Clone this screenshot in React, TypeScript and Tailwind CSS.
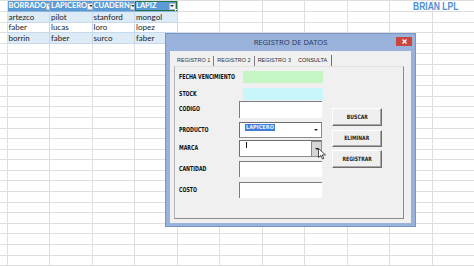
import React from 'react';

const header = ['BORRADO', 'LAPICERO', 'CUADERN', 'LAPIZ'];
const rows = [
  ['artezco', 'pilot', 'stanford', 'mongol'],
  ['faber', 'lucas', 'loro', 'lopez'],
  ['borrin', 'faber', 'surco', 'faber'],
];

function FilterBtn() {
  return (
    <span className="ml-auto mr-[1px] flex h-[7px] w-[7px] shrink-0 items-center justify-center border border-[#b9b9b9] bg-[#f4f4f4]">
      <span className="h-0 w-0 border-x-[2px] border-t-[2px] border-x-transparent border-t-[#333]" />
    </span>
  );
}

function Cell({ r, c }: { r: number; c: number }) {
  if (r === 1 && c < 4) {
    return (
      <div className="relative flex w-[42.5px] shrink-0 items-center overflow-hidden border-b border-r border-[#8fb4de] bg-[#5b9bd5] pl-[1px]">
        <span className="whitespace-nowrap text-[7.5px] font-bold leading-none text-white">{header[c]}</span>
        <FilterBtn />
        {c === 3 && (
          <>
            <span className="absolute -left-[1px] -top-[1px] h-[11.6px] w-[43.5px] border-2 border-[#217346]" />
            <span className="absolute -bottom-[2px] -right-[2px] h-[4px] w-[4px] border border-white bg-[#217346]" />
          </>
        )}
      </div>
    );
  }
  if (r >= 2 && r <= 4 && c < 4) {
    const bg = r === 3 ? 'bg-white' : 'bg-[#ddebf7]';
    return (
      <div className={`flex w-[42.5px] shrink-0 items-center border-b border-r border-[#c9d9ec] pl-[1px] ${bg}`}>
        <span className="whitespace-nowrap text-[8px] leading-none text-[#222]">{rows[r - 2][c]}</span>
      </div>
    );
  }
  return <div className="w-[42.5px] shrink-0 border-b border-r border-[#dedede]" />;
}

function Sheet() {
  return (
    <div className="flex flex-col font-['Lato',sans-serif]">
      {Array.from({ length: 26 }).map((_, r) => (
        <div key={r} className={`flex ${r === 0 ? 'h-[1.4px]' : 'h-[10.6px]'}`}>
          <div className="w-[7.5px] shrink-0 border-b border-r border-[#dedede]" />
          {Array.from({ length: 11 }).map((_, c) => (
            <Cell key={c} r={r} c={c} />
          ))}
        </div>
      ))}
    </div>
  );
}

// condensed heavy caption, squeezed to the narrow look of the form font
function Label({ text }: { text: string }) {
  return (
    <span className="w-[60px] shrink-0 origin-left scale-x-[0.77] whitespace-nowrap text-[6.8px] font-bold leading-none text-[#111]">
      {text}
    </span>
  );
}

function TextBox() {
  return <div className="h-full w-[83px] border-l border-t border-[#7c7c7c] border-b-[#f4f4f4] border-r-[#f4f4f4] bg-white" />;
}

function Arrow() {
  return <span className="h-0 w-0 border-x-[2px] border-t-[2px] border-x-transparent border-t-[#222]" />;
}

function Button({ text, h }: { text: string; h: string }) {
  return (
    <div className={`flex w-[50px] items-center justify-center border border-[#ffffff] border-b-[#6e6e6e] border-r-[#6e6e6e] bg-[#efefef] shadow-[inset_-1px_-1px_0_#a8a8a8] ${h}`}>
      <span className="scale-x-[0.85] text-[6px] font-bold leading-none text-[#222]">{text}</span>
    </div>
  );
}

function Tab({ text, line }: { text: string; line: boolean }) {
  return (
    <div className={`flex h-[10px] items-center px-[3px] ${line ? 'border-r border-[#7d7d7d]' : ''}`}>
      <span className="whitespace-nowrap text-[5.5px] leading-none text-[#333]">{text}</span>
    </div>
  );
}

function Dialog() {
  return (
    <div className="absolute left-[165px] top-[33px] flex h-[194px] w-[251px] flex-col border border-[#7895c9] bg-[#99b2dc] px-[4px] pb-[3px] font-['DejaVu_Sans_Condensed',sans-serif]">
      <div className="flex h-[17px] shrink-0 items-center justify-center">
        <span className="font-['Noto_Sans',sans-serif] text-[7.6px] leading-none text-[#2a3f66]">REGISTRO DE DATOS</span>
      </div>
      <button className="absolute right-[3px] top-[3px] flex h-[9px] w-[16px] items-center justify-center bg-[#c9473f]">
        <svg width="5" height="5" viewBox="0 0 5 5">
          <path d="M0.5 0.5 L4.5 4.5 M4.5 0.5 L0.5 4.5" stroke="#fff" strokeWidth="1.3" />
        </svg>
      </button>

      <div className="flex flex-1 flex-col bg-[#f0f0f0] pb-[4px] pl-[4px] pr-[7px] pt-[3px]">
        <div className="flex h-[12px] shrink-0 items-end font-['Liberation_Sans',sans-serif]">
          <Tab text="REGISTRO 1" line />
          <Tab text="REGISTRO 2" line />
          <Tab text="REGISTRO 3" line={false} />
          <div className="flex h-[11px] items-center border-r border-[#6f6f6f] pl-[4px] pr-[4px]">
            <span className="whitespace-nowrap text-[5.5px] leading-none text-[#222]">CONSULTA</span>
          </div>
        </div>

        <div className="relative flex flex-1 border border-[#b4b4b4] border-b-[#8a8a8a] border-r-[#8a8a8a] border-t-[#e2e2e2] pl-[4px]">
          <div className="flex w-[144px] flex-col">
            <div className="mt-[4px] flex h-[12px] items-center">
              <Label text="FECHA VENCIMIENTO" />
              <div className="ml-[4px] h-full w-[80px] bg-[#c4f5c3]" />
            </div>
            <div className="mt-[5px] flex h-[12px] items-center">
              <Label text="STOCK" />
              <div className="ml-[4px] h-full w-[80px] bg-[#c8f7fb]" />
            </div>
            <div className="mt-[1px] flex h-[17px] items-center">
              <Label text="CODIGO" />
              <TextBox />
            </div>
            <div className="mt-[4px] flex h-[16px] items-center">
              <Label text="PRODUCTO" />
              <div className="flex h-full w-[83px] border border-[#8c8c8c] border-l-[#6e6e6e] border-t-[#6e6e6e] bg-white">
                <div className="flex flex-1 items-start pl-[5px] pt-[1px]">
                  <span className="bg-[#3f7fd8] px-[1px] py-[0.5px] text-[5.6px] font-bold leading-none text-[#e8f0ff]">LAPICERO</span>
                </div>
                <div className="flex w-[10px] items-center justify-center">
                  <Arrow />
                </div>
              </div>
            </div>
            <div className="mt-[2px] flex h-[17px] items-center">
              <Label text="MARCA" />
              <div className="relative flex h-full w-[83px] border border-[#8c8c8c] border-l-[#6e6e6e] border-t-[#6e6e6e] bg-white">
                <div className="flex-1 pl-[6px] pt-[1px]">
                  <span className="block h-[6px] w-[1px] bg-[#111]" />
                </div>
                <div className="flex w-[10px] items-center justify-center border-l border-t border-[#8a8a8a] bg-[#d6d6d6]">
                  <Arrow />
                </div>
                <svg className="absolute left-[78px] top-[7px]" width="9" height="12" viewBox="0 0 9 12">
                  <path d="M0.5 0.5 L0.5 9.5 L2.8 7.4 L4.4 11 L5.8 10.4 L4.3 6.9 L7.5 6.9 Z" fill="#fff" stroke="#222" strokeWidth="0.8" strokeLinejoin="round" />
                </svg>
              </div>
            </div>
            <div className="mt-[4px] flex h-[16px] items-center">
              <Label text="CANTIDAD" />
              <TextBox />
            </div>
            <div className="mt-[5px] flex h-[16px] items-center">
              <Label text="COSTO" />
              <TextBox />
            </div>
          </div>

          <div className="ml-[9px] mt-[41px] flex flex-col gap-[3.5px]">
            <Button text="BUSCAR" h="h-[18px]" />
            <Button text="ELIMINAR" h="h-[17px]" />
            <Button text="REGISTRAR" h="h-[18px]" />
          </div>
        </div>
      </div>
    </div>
  );
}

export default function App() {
  return (
    <div className="relative h-[266px] w-[474px] overflow-hidden bg-white">
      <Sheet />
      <div className="absolute left-[413px] top-[1px] origin-top scale-y-[1.3] font-['Liberation_Sans',sans-serif] text-[8.5px] font-bold leading-none text-[#4f8fd4] [text-shadow:0_0_2px_#fff,0_0_1px_#fff]">
        BRIAN LPL
      </div>
      <Dialog />
    </div>
  );
}
